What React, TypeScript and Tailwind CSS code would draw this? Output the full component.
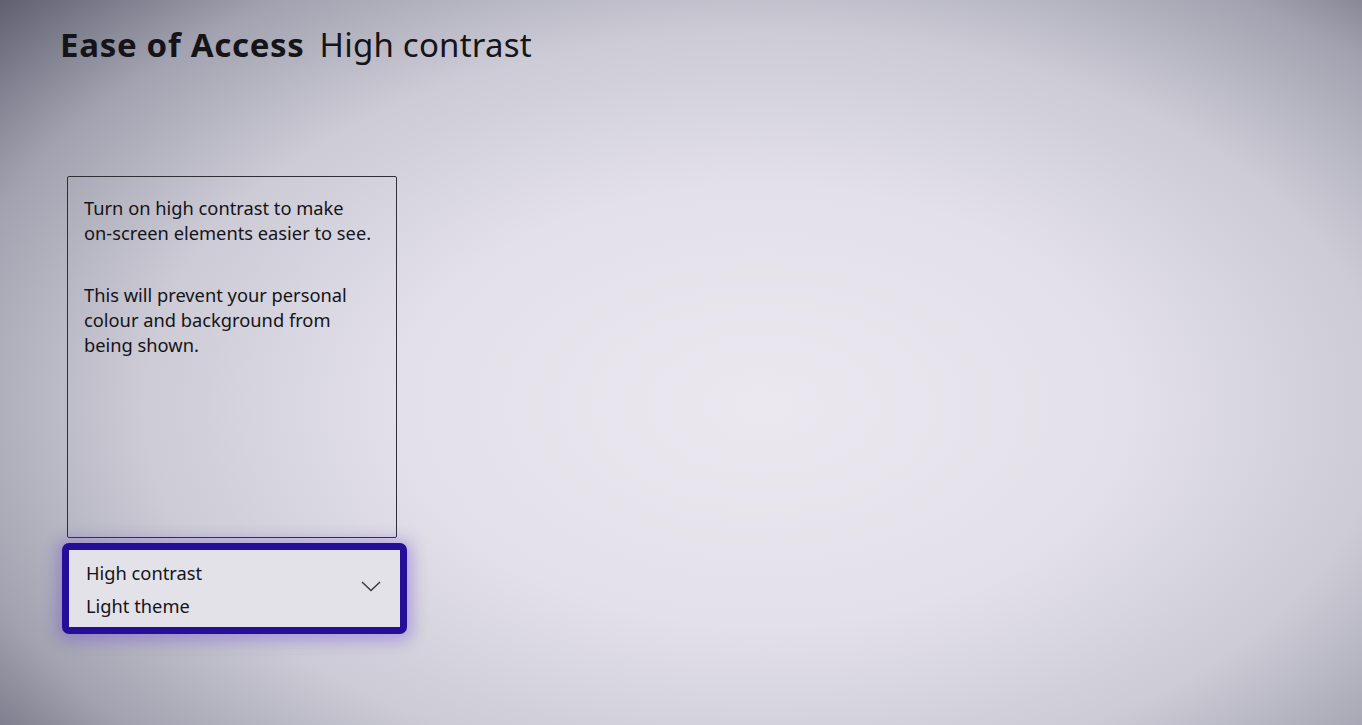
import React from "react";

export default function App() {
  return (
    <div
      className="relative w-[1362px] h-[725px] overflow-hidden bg-[radial-gradient(ellipse_76%_86%_at_56%_56%,#ece8f0_0%,#e3e0e9_35%,#cccbd6_60%,#a2a2b0_80%,#595a6a_100%)] text-[#141419]"
      style={{ fontFamily: '"Noto Sans", "Open Sans", "DejaVu Sans", sans-serif' }}
    >
      <div className="flex flex-col pl-[60px] pt-[24px]">
        <h1 className="flex items-baseline gap-[15px] text-[33px] leading-[42px]">
          <span className="font-bold tracking-[0.7px]">Ease of Access</span>
          <span className="font-normal tracking-[0.2px]">High contrast</span>
        </h1>

        <div className="ml-[7px] mt-[110px] w-[330px] h-[362px] border border-[#2f2f36] rounded-[2px] pl-[16px] pr-[8px] pt-[18px] text-[18.3px] leading-[25px]">
          <p>
            Turn on high contrast to make <span className="whitespace-nowrap">on-screen</span> elements easier to see.
          </p>
          <p className="mt-[37px] pr-[30px]">
            This will prevent your personal colour and background from being shown.
          </p>
        </div>

        <div className="ml-[2px] mt-[5px] w-[345px] h-[91px] border-[7px] border-[#260f98] rounded-[7px] bg-[#e3e2e9] shadow-[0_2px_16px_5px_rgba(90,50,210,0.33)] flex items-center pl-[17px] pr-[19px]">
          <div className="flex-1 flex flex-col text-[18.3px] leading-[33px] mt-[1px]">
            <span>High contrast</span>
            <span>Light theme</span>
          </div>
          <svg width="20" height="11" viewBox="0 0 20 11" className="-mt-[4px]">
            <path d="M1 1 L10 9.5 L19 1" fill="none" stroke="#3a3a42" strokeWidth="1.5" />
          </svg>
        </div>
      </div>
    </div>
  );
}
